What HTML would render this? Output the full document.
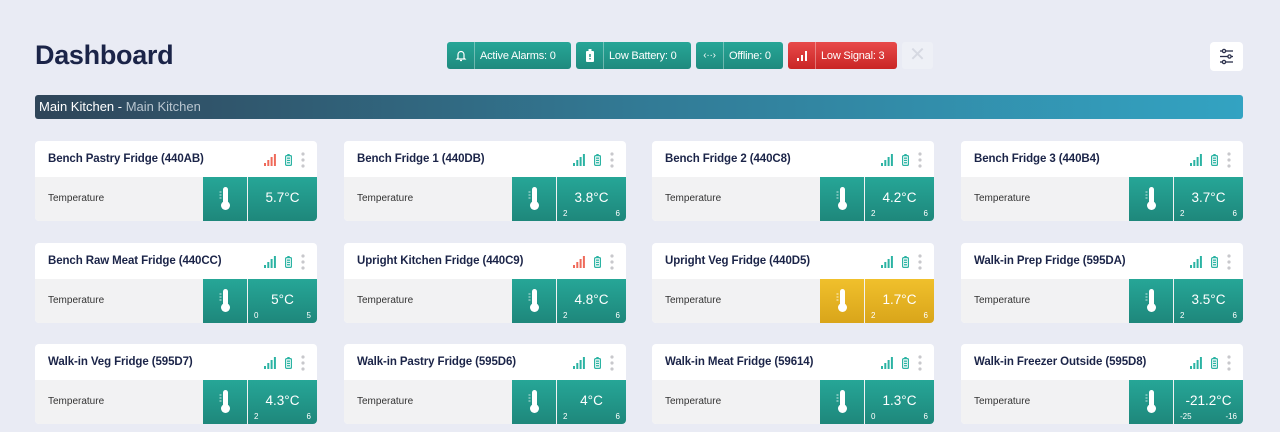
<!DOCTYPE html>
<html><head><meta charset="utf-8"><style>
*{box-sizing:border-box;margin:0;padding:0}
body{width:1280px;height:432px;background:#e9ebf4;font-family:"Liberation Sans",sans-serif;position:relative;overflow:hidden}
h1{position:absolute;left:35px;top:40px;font-size:27px;font-weight:bold;color:#1b2448;letter-spacing:-0.3px}
.badge{position:absolute;top:42px;height:27px;border-radius:3px;background:linear-gradient(#26a697,#1f8a7e);color:#fff;font-size:11px;display:flex;align-items:center;white-space:nowrap;overflow:hidden;letter-spacing:-0.2px}
.badge .ic{width:28px;flex:none;height:100%;border-right:1px solid rgba(255,255,255,.35);display:flex;align-items:center;justify-content:center}
.badge .tx{padding:0 5px}
.badge.red{background:linear-gradient(#e84a4a,#c92525)}
.xbox{position:absolute;left:902px;top:42px;width:31px;height:27px;background:#eef0f6;border-radius:3px;color:#d6d9e2;font-size:20px;text-align:center;line-height:26px}
.set{position:absolute;left:1210px;top:42px;width:33px;height:29px;background:#fff;border-radius:4px}
.banner{position:absolute;left:35px;top:95px;width:1208px;height:24px;border-radius:3px;background:linear-gradient(90deg,#2f4559,#327a95 50%,#33a3c2);color:#fff;font-size:13px;line-height:24px;padding-left:4px}
.banner span{color:#b9c6d0}
.card{position:absolute;width:282px;height:80px;background:#fff;border-radius:4px;overflow:hidden}
.hd{height:36px;padding-left:13px;font-size:11.5px;font-weight:bold;color:#1b2448;line-height:36px;position:relative;letter-spacing:-0.1px}
.icons{position:absolute;right:12px;top:11px;display:flex;align-items:center;gap:9px}
.bd{height:44px;background:#f2f2f3;position:relative}
.lbl{position:absolute;left:13px;top:16px;font-size:10px;color:#333}
.tb{position:absolute;left:168px;top:0;width:44px;height:44px;background:linear-gradient(#26a697,#1e877b);display:flex;align-items:center;justify-content:center}
.vb{position:absolute;left:213px;top:0;width:69px;height:44px;background:linear-gradient(#26a697,#1e877b);color:#fff;font-size:13.5px;text-align:center;padding-top:13px}
.y .tb,.y .vb{background:linear-gradient(#f0c02c,#d9a51a)}
.mn,.mx{position:absolute;bottom:3px;font-size:8px;color:#fff}
.mn{left:6px}.mx{right:6px}
</style></head><body>
<h1>Dashboard</h1>
<div class="badge" style="left:447px;width:124px"><div class="ic"><svg width="12" height="13" viewBox="0 0 12 13"><path d="M3 9V5.5a3 3 0 016 0V9l1 1H2z M5 11.5h2" fill="none" stroke="#fff" stroke-width="1.2"/></svg></div><div class="tx">Active Alarms: 0</div></div>
<div class="badge" style="left:576px;width:115px"><div class="ic"><svg width="8" height="13"><rect x="0" y="2" width="8" height="11" rx="1" fill="#fff"/><rect x="2.5" y="0" width="3" height="2" fill="#fff"/><rect x="3.3" y="5" width="1.4" height="3" fill="#1f8a7e"/><rect x="3.3" y="9" width="1.4" height="1.4" fill="#1f8a7e"/></svg></div><div class="tx">Low Battery: 0</div></div>
<div class="badge" style="left:696px;width:87px"><div class="ic" style="font-size:10px">&lsaquo;&middot;&middot;&rsaquo;</div><div class="tx">Offline: 0</div></div>
<div class="badge red" style="left:788px;width:109px"><div class="ic"><svg width="10" height="10"><rect x="0" y="7" width="2" height="3" fill="#fff"/><rect x="4" y="4" width="2" height="6" fill="#fff"/><rect x="8" y="0" width="2" height="10" fill="#fff"/></svg></div><div class="tx">Low Signal: 3</div></div>
<div class="xbox">&#x2715;</div>
<div class="set"><svg width="33" height="29" viewBox="0 0 33 29"><g stroke="#2a2f4a" stroke-width="1.3" fill="#fff"><line x1="10" y1="9" x2="23" y2="9"/><line x1="10" y1="14.5" x2="23" y2="14.5"/><line x1="10" y1="20" x2="23" y2="20"/><circle cx="14" cy="9" r="1.6"/><circle cx="19.5" cy="14.5" r="1.6"/><circle cx="14" cy="20" r="1.6"/></g></svg></div>
<div class="banner">Main Kitchen - <span>Main Kitchen</span></div>

<svg width="0" height="0" style="position:absolute"><defs>
<symbol id="sg" viewBox="0 0 12 12"><rect x="0" y="9" width="2" height="3"/><rect x="3.3" y="6" width="2" height="6"/><rect x="6.6" y="3" width="2" height="9"/><rect x="9.9" y="0" width="2" height="12"/></symbol>
<symbol id="bt" viewBox="0 0 7 12"><rect x="0.6" y="1.6" width="5.8" height="9.8" rx="1" fill="none" stroke="#2bb3a3" stroke-width="1.2"/><rect x="2.3" y="0" width="2.4" height="1.6" fill="#2bb3a3"/><rect x="2" y="3.5" width="3" height="1.3" fill="#2bb3a3"/><rect x="2" y="5.8" width="3" height="1.3" fill="#2bb3a3"/><rect x="2" y="8.1" width="3" height="1.3" fill="#2bb3a3"/></symbol>
<symbol id="dt" viewBox="0 0 4 16"><circle cx="2" cy="2" r="1.6" fill="#c8c8cc"/><circle cx="2" cy="8" r="1.6" fill="#c8c8cc"/><circle cx="2" cy="14" r="1.6" fill="#c8c8cc"/></symbol>
<symbol id="th" viewBox="0 0 12 24"><rect x="4" y="0" width="5" height="17" rx="2.5" fill="#fff"/><circle cx="6.5" cy="18.5" r="4.5" fill="#fff"/><g stroke="#fff" stroke-width="0.8"><line x1="0.5" y1="5" x2="2.5" y2="5"/><line x1="0.5" y1="8" x2="2.5" y2="8"/><line x1="0.5" y1="11" x2="2.5" y2="11"/></g></symbol>
</defs></svg>

<div class="card" style="left:35px;top:141px"><div class="hd">Bench Pastry Fridge (440AB)<div class="icons"><svg width="12" height="12" fill="#ef6a5a"><use href="#sg"/></svg><svg width="7" height="12"><use href="#bt"/></svg><svg width="4" height="16"><use href="#dt"/></svg></div></div><div class="bd"><div class="lbl">Temperature</div><div class="tb"><svg width="12" height="24"><use href="#th"/></svg></div><div class="vb">5.7°C</div></div></div>
<div class="card" style="left:344px;top:141px"><div class="hd">Bench Fridge 1 (440DB)<div class="icons"><svg width="12" height="12" fill="#2bb3a3"><use href="#sg"/></svg><svg width="7" height="12"><use href="#bt"/></svg><svg width="4" height="16"><use href="#dt"/></svg></div></div><div class="bd"><div class="lbl">Temperature</div><div class="tb"><svg width="12" height="24"><use href="#th"/></svg></div><div class="vb">3.8°C<span class="mn">2</span><span class="mx">6</span></div></div></div>
<div class="card" style="left:652px;top:141px"><div class="hd">Bench Fridge 2 (440C8)<div class="icons"><svg width="12" height="12" fill="#2bb3a3"><use href="#sg"/></svg><svg width="7" height="12"><use href="#bt"/></svg><svg width="4" height="16"><use href="#dt"/></svg></div></div><div class="bd"><div class="lbl">Temperature</div><div class="tb"><svg width="12" height="24"><use href="#th"/></svg></div><div class="vb">4.2°C<span class="mn">2</span><span class="mx">6</span></div></div></div>
<div class="card" style="left:961px;top:141px"><div class="hd">Bench Fridge 3 (440B4)<div class="icons"><svg width="12" height="12" fill="#2bb3a3"><use href="#sg"/></svg><svg width="7" height="12"><use href="#bt"/></svg><svg width="4" height="16"><use href="#dt"/></svg></div></div><div class="bd"><div class="lbl">Temperature</div><div class="tb"><svg width="12" height="24"><use href="#th"/></svg></div><div class="vb">3.7°C<span class="mn">2</span><span class="mx">6</span></div></div></div>
<div class="card" style="left:35px;top:243px"><div class="hd">Bench Raw Meat Fridge (440CC)<div class="icons"><svg width="12" height="12" fill="#2bb3a3"><use href="#sg"/></svg><svg width="7" height="12"><use href="#bt"/></svg><svg width="4" height="16"><use href="#dt"/></svg></div></div><div class="bd"><div class="lbl">Temperature</div><div class="tb"><svg width="12" height="24"><use href="#th"/></svg></div><div class="vb">5°C<span class="mn">0</span><span class="mx">5</span></div></div></div>
<div class="card" style="left:344px;top:243px"><div class="hd">Upright Kitchen Fridge (440C9)<div class="icons"><svg width="12" height="12" fill="#ef6a5a"><use href="#sg"/></svg><svg width="7" height="12"><use href="#bt"/></svg><svg width="4" height="16"><use href="#dt"/></svg></div></div><div class="bd"><div class="lbl">Temperature</div><div class="tb"><svg width="12" height="24"><use href="#th"/></svg></div><div class="vb">4.8°C<span class="mn">2</span><span class="mx">6</span></div></div></div>
<div class="card y" style="left:652px;top:243px"><div class="hd">Upright Veg Fridge (440D5)<div class="icons"><svg width="12" height="12" fill="#2bb3a3"><use href="#sg"/></svg><svg width="7" height="12"><use href="#bt"/></svg><svg width="4" height="16"><use href="#dt"/></svg></div></div><div class="bd"><div class="lbl">Temperature</div><div class="tb"><svg width="12" height="24"><use href="#th"/></svg></div><div class="vb">1.7°C<span class="mn">2</span><span class="mx">6</span></div></div></div>
<div class="card" style="left:961px;top:243px"><div class="hd">Walk-in Prep Fridge (595DA)<div class="icons"><svg width="12" height="12" fill="#2bb3a3"><use href="#sg"/></svg><svg width="7" height="12"><use href="#bt"/></svg><svg width="4" height="16"><use href="#dt"/></svg></div></div><div class="bd"><div class="lbl">Temperature</div><div class="tb"><svg width="12" height="24"><use href="#th"/></svg></div><div class="vb">3.5°C<span class="mn">2</span><span class="mx">6</span></div></div></div>
<div class="card" style="left:35px;top:344px"><div class="hd">Walk-in Veg Fridge (595D7)<div class="icons"><svg width="12" height="12" fill="#2bb3a3"><use href="#sg"/></svg><svg width="7" height="12"><use href="#bt"/></svg><svg width="4" height="16"><use href="#dt"/></svg></div></div><div class="bd"><div class="lbl">Temperature</div><div class="tb"><svg width="12" height="24"><use href="#th"/></svg></div><div class="vb">4.3°C<span class="mn">2</span><span class="mx">6</span></div></div></div>
<div class="card" style="left:344px;top:344px"><div class="hd">Walk-in Pastry Fridge (595D6)<div class="icons"><svg width="12" height="12" fill="#2bb3a3"><use href="#sg"/></svg><svg width="7" height="12"><use href="#bt"/></svg><svg width="4" height="16"><use href="#dt"/></svg></div></div><div class="bd"><div class="lbl">Temperature</div><div class="tb"><svg width="12" height="24"><use href="#th"/></svg></div><div class="vb">4°C<span class="mn">2</span><span class="mx">6</span></div></div></div>
<div class="card" style="left:652px;top:344px"><div class="hd">Walk-in Meat Fridge (59614)<div class="icons"><svg width="12" height="12" fill="#2bb3a3"><use href="#sg"/></svg><svg width="7" height="12"><use href="#bt"/></svg><svg width="4" height="16"><use href="#dt"/></svg></div></div><div class="bd"><div class="lbl">Temperature</div><div class="tb"><svg width="12" height="24"><use href="#th"/></svg></div><div class="vb">1.3°C<span class="mn">0</span><span class="mx">6</span></div></div></div>
<div class="card" style="left:961px;top:344px"><div class="hd">Walk-in Freezer Outside (595D8)<div class="icons"><svg width="12" height="12" fill="#2bb3a3"><use href="#sg"/></svg><svg width="7" height="12"><use href="#bt"/></svg><svg width="4" height="16"><use href="#dt"/></svg></div></div><div class="bd"><div class="lbl">Temperature</div><div class="tb"><svg width="12" height="24"><use href="#th"/></svg></div><div class="vb">-21.2°C<span class="mn">-25</span><span class="mx">-16</span></div></div></div>
</body></html>
